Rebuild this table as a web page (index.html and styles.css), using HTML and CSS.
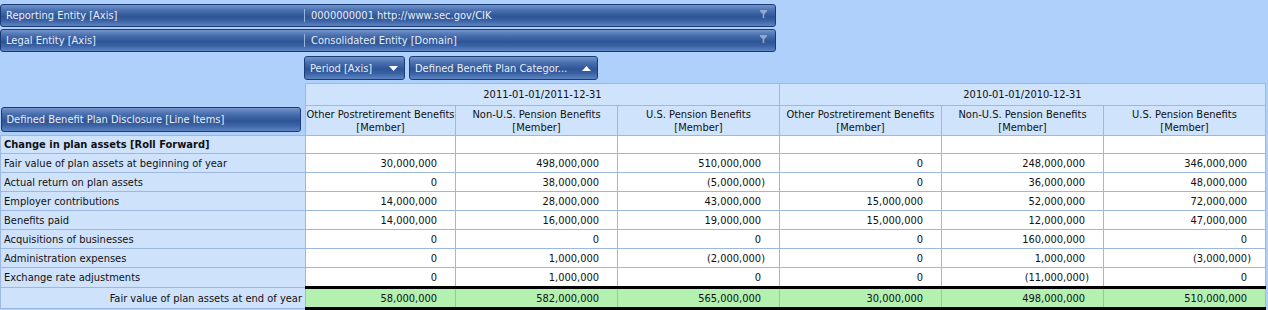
FILE: index.html
```html
<!DOCTYPE html>
<html>
<head>
<meta charset="utf-8">
<link rel="stylesheet" href="styles.css">
</head>
<body>
<div class="page">
  <div class="axis-bar">
    <span class="axis-name">Reporting Entity [Axis]</span>
    <span class="sep"></span>
    <span class="axis-value">0000000001 http://www.sec.gov/CIK</span>
    <svg class="funnel" width="7" height="8" viewBox="0 0 7 8"><path d="M0 0H7V1.5L4.3 4V8H2.7V4L0 1.5Z" fill="#8ea8cf"/></svg>
  </div>
  <div class="axis-bar">
    <span class="axis-name">Legal Entity [Axis]</span>
    <span class="sep"></span>
    <span class="axis-value">Consolidated Entity [Domain]</span>
    <svg class="funnel" width="7" height="8" viewBox="0 0 7 8"><path d="M0 0H7V1.5L4.3 4V8H2.7V4L0 1.5Z" fill="#8ea8cf"/></svg>
  </div>
  <div class="btn-row">
    <div class="btn btn-period"><span>Period [Axis]</span><svg width="9" height="5" viewBox="0 0 9 5"><path d="M0 0H9L4.5 5Z" fill="#ffffff"/></svg></div>
    <div class="btn btn-cat"><span>Defined Benefit Plan Categor...</span><svg width="9" height="5" viewBox="0 0 9 5"><path d="M0 5H9L4.5 0Z" fill="#ffffff"/></svg></div>
  </div>
  <table class="grid">
    <colgroup>
      <col class="c-label"><col class="c-first"><col class="c-data"><col class="c-data"><col class="c-data"><col class="c-data"><col class="c-data">
    </colgroup>
    <thead>
      <tr class="period-row">
        <th class="corner" rowspan="2"><div class="li-bar">Defined Benefit Plan Disclosure [Line Items]</div></th>
        <th colspan="3">2011-01-01/2011-12-31</th>
        <th colspan="3">2010-01-01/2010-12-31</th>
      </tr>
      <tr class="member-row">
        <th>Other Postretirement Benefits<br>[Member]</th>
        <th>Non-U.S. Pension Benefits<br>[Member]</th>
        <th>U.S. Pension Benefits<br>[Member]</th>
        <th>Other Postretirement Benefits<br>[Member]</th>
        <th>Non-U.S. Pension Benefits<br>[Member]</th>
        <th>U.S. Pension Benefits<br>[Member]</th>
      </tr>
    </thead>
    <tbody>
      <tr class="first-row"><td class="lbl bold">Change in plan assets [Roll Forward]</td><td></td><td></td><td></td><td></td><td></td><td></td></tr>
      <tr><td class="lbl">Fair value of plan assets at beginning of year</td><td>30,000,000<i>)</i></td><td>498,000,000<i>)</i></td><td>510,000,000<i>)</i></td><td>0<i>)</i></td><td>248,000,000<i>)</i></td><td>346,000,000<i>)</i></td></tr>
      <tr><td class="lbl">Actual return on plan assets</td><td>0<i>)</i></td><td>38,000,000<i>)</i></td><td>(5,000,000)</td><td>0<i>)</i></td><td>36,000,000<i>)</i></td><td>48,000,000<i>)</i></td></tr>
      <tr><td class="lbl">Employer contributions</td><td>14,000,000<i>)</i></td><td>28,000,000<i>)</i></td><td>43,000,000<i>)</i></td><td>15,000,000<i>)</i></td><td>52,000,000<i>)</i></td><td>72,000,000<i>)</i></td></tr>
      <tr><td class="lbl">Benefits paid</td><td>14,000,000<i>)</i></td><td>16,000,000<i>)</i></td><td>19,000,000<i>)</i></td><td>15,000,000<i>)</i></td><td>12,000,000<i>)</i></td><td>47,000,000<i>)</i></td></tr>
      <tr><td class="lbl">Acquisitions of businesses</td><td>0<i>)</i></td><td>0<i>)</i></td><td>0<i>)</i></td><td>0<i>)</i></td><td>160,000,000<i>)</i></td><td>0<i>)</i></td></tr>
      <tr><td class="lbl">Administration expenses</td><td>0<i>)</i></td><td>1,000,000<i>)</i></td><td>(2,000,000)</td><td>0<i>)</i></td><td>1,000,000<i>)</i></td><td>(3,000,000)</td></tr>
      <tr><td class="lbl">Exchange rate adjustments</td><td>0<i>)</i></td><td>1,000,000<i>)</i></td><td>0<i>)</i></td><td>0<i>)</i></td><td>(11,000,000)</td><td>0<i>)</i></td></tr>
      <tr class="total"><td class="lbl right">Fair value of plan assets at end of year</td><td>58,000,000<i>)</i></td><td>582,000,000<i>)</i></td><td>565,000,000<i>)</i></td><td>30,000,000<i>)</i></td><td>498,000,000<i>)</i></td><td>510,000,000<i>)</i></td></tr>
    </tbody>
  </table>
</div>
</body>
</html>
```

FILE: styles.css
```css
html, body {
  margin: 0;
  padding: 0;
  background: #afd0fa;
  font-family: Tahoma, "DejaVu Sans Condensed", "Liberation Sans", sans-serif;
  font-size: 11px;
  color: #111;
}

.page {
  width: 1268px;
  height: 310px;
  overflow: hidden;
  padding-top: 4px;
  box-sizing: border-box;
}

.axis-bar {
  display: flex;
  align-items: center;
  width: 776px;
  height: 23px;
  box-sizing: border-box;
  margin-bottom: 2px;
  border: 1px solid #1b3b74;
  border-radius: 3px;
  background: linear-gradient(to bottom, #7595cb 0%, #4a70b0 25%, #2e5596 55%, #3a62a4 75%, #5f84c2 100%);
  color: #e9eef8;
}

.axis-name {
  width: 303px;
  padding-left: 5px;
  box-sizing: border-box;
}

.sep {
  width: 1px;
  height: 13px;
  background: #9ab4da;
  margin-right: 6px;
}

.axis-value {
  flex: 1;
}

.funnel {
  margin-right: 8px;
  margin-top: -4px;
}

.btn-row {
  display: flex;
  gap: 4px;
  margin-top: 4px;
  padding-left: 304px;
}

.btn {
  display: flex;
  align-items: center;
  justify-content: space-between;
  height: 24px;
  box-sizing: border-box;
  border: 1px solid #1b3b74;
  border-radius: 3px;
  background: linear-gradient(to bottom, #7595cb 0%, #4a70b0 25%, #2e5596 55%, #3a62a4 75%, #5f84c2 100%);
  color: #e9eef8;
  padding: 0 6px 0 5px;
}

.btn-period { width: 101px; }
.btn-cat { width: 189px; }

.grid {
  margin-top: 3px;
  border-collapse: collapse;
  table-layout: fixed;
  width: 1265px;
}

.c-label { width: 305px; }
.c-first { width: 150px; }
.c-data { width: 162px; }

.grid th {
  background: #d0e3fc;
  border: 1px solid #9bb7e2;
  font-weight: normal;
  text-align: center;
  padding: 0;
  line-height: 13px;
  white-space: nowrap;
  overflow: hidden;
}

.grid th.corner {
  background: #afd0fa;
  border-top: none;
  border-left: none;
  border-bottom: 1px solid #9bb7e2;
  padding: 0;
  vertical-align: top;
}

.li-bar {
  margin-top: 23px;
  width: 300px;
  height: 25px;
  box-sizing: border-box;
  border: 1px solid #1b3b74;
  border-radius: 3px;
  background: linear-gradient(to bottom, #7595cb 0%, #4a70b0 25%, #2e5596 55%, #3a62a4 75%, #5f84c2 100%);
  color: #e9eef8;
  text-align: left;
  padding-left: 5px;
  line-height: 23px;
}

.period-row th { height: 21px; }
.member-row th { height: 29px; }

.grid td {
  border: 1px solid #9bb7e2;
  background: #ffffff;
  height: 18px;
  padding: 0 14px 0 3px;
  text-align: right;
  white-space: nowrap;
  line-height: 13px;
}

.grid td i {
  font-style: normal;
  visibility: hidden;
}

.first-row td { height: 17px; }

.grid td.lbl {
  background: #cfe2fc;
  text-align: left;
  padding-left: 3px;
}

.grid td.bold { font-weight: bold; }

.grid td.right {
  text-align: right;
  padding-right: 3px;
}

.total td {
  background: #b4f0b0;
  border-top: 3px solid #000;
  border-bottom: 3px solid #000;
}

.total td.lbl {
  background: #cfe2fc;
  border-top: 1px solid #9bb7e2;
  border-bottom: 1px solid #9bb7e2;
}
```
